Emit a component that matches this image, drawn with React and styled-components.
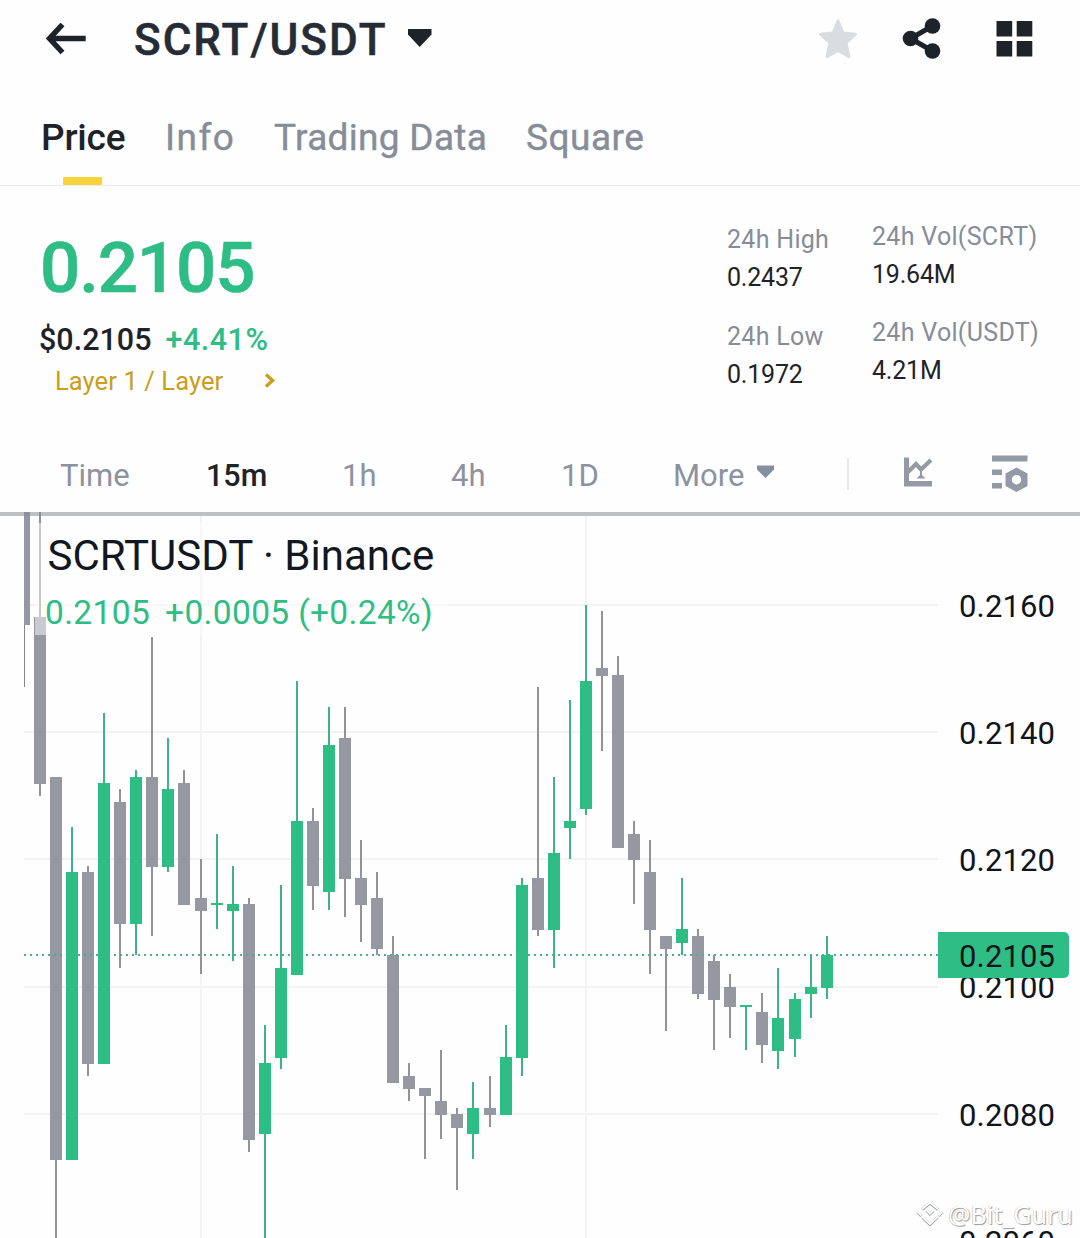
import React from "react";
import styled, { createGlobalStyle } from "styled-components";

const GlobalStyle = createGlobalStyle`
  * {
    box-sizing: border-box;
  }
  body {
    margin: 0;
    background: #fefefe;
    overflow: hidden;
  }
`;

const UP = "#2ebd85";
const DOWN = "#9598a1";

const Container = styled.div`
  display: flex;
  flex-direction: column;
  width: 1080px;
  height: 1238px;
  overflow: hidden;
  background: #fefefe;
  color: #1e2329;
  font-family: Roboto, "Liberation Sans", sans-serif;
`;

const Icon = styled.svg`
  display: block;
  flex-shrink: 0;
`;

const Topbar = styled.header`
  display: flex;
  align-items: center;
  height: 80px;
  padding: 0 46px;
`;

const Pair = styled.div`
  width: 273px;
  margin-left: 48px;
  font-size: 44px;
  font-weight: 500;
  letter-spacing: 2px;
  line-height: 80px;
  white-space: nowrap;
  color: #252c36;
  -webkit-text-stroke: 0.5px;
`;

const Actions = styled.div`
  display: flex;
  align-items: center;
  gap: 44px;
  height: 77px;
  margin-left: auto;
  margin-bottom: 3px;
`;

const Tabs = styled.nav`
  display: flex;
  height: 106px;
  padding-left: 41px;
  border-bottom: 1px solid #eaecef;
`;

const Tab = styled.div`
  position: relative;
  width: ${(props) => props.$width}px;
  margin-right: 40px;
  padding-top: 10px;
  font-size: 37px;
  font-weight: ${(props) => (props.$active ? 500 : 400)};
  letter-spacing: ${(props) => props.$spacing || 0.3}px;
  line-height: 95px;
  white-space: nowrap;
  color: ${(props) => (props.$active ? "#1e2329" : "#868d98")};
  -webkit-text-stroke: ${(props) => (props.$active ? 0 : 0.4)}px;
`;

const TabLine = styled.div`
  position: absolute;
  bottom: 0;
  left: 22px;
  width: 39px;
  height: 8px;
  border-radius: 1px;
  background: #f8d33a;
`;

const Summary = styled.section`
  display: flex;
  height: 252px;
  padding-left: 40px;
`;

const PriceBox = styled.div`
  width: 687px;
  padding-top: 40px;
`;

const LastPrice = styled.div`
  font-size: 71px;
  font-weight: 500;
  line-height: 84px;
  letter-spacing: -1.2px;
  color: ${UP};
  -webkit-text-stroke: 0.6px;
`;

const SubPrice = styled.div`
  display: flex;
  gap: 14px;
  margin: 12px 0 0 -1px;
  font-size: 30.5px;
  font-weight: 500;
  line-height: 36px;
`;

const Change = styled.span`
  letter-spacing: 0.5px;
  color: ${UP};
`;

const Tag = styled.div`
  display: flex;
  align-items: center;
  gap: 41px;
  margin: 6px 0 0 15px;
  font-size: 25.5px;
  line-height: 34px;
  letter-spacing: 0.1px;
  color: #c99f1c;
`;

const Stats = styled.div`
  width: 145px;
  padding-top: ${(props) => props.$top}px;
`;

const Stat = styled.div`
  margin-bottom: ${(props) => props.$gap}px;
`;

const StatLabel = styled.div`
  font-size: 25px;
  line-height: 38px;
  letter-spacing: 0.3px;
  white-space: nowrap;
  color: #868d98;
`;

const StatValue = styled.div`
  font-size: 25px;
  line-height: ${(props) => props.$line}px;
  letter-spacing: -0.2px;
`;

const Intervals = styled.div`
  display: flex;
  align-items: center;
  height: 74px;
  padding-left: 60px;
`;

const Interval = styled.div`
  display: flex;
  align-items: center;
  gap: 13px;
  width: ${(props) => props.$width}px;
  padding-top: 2px;
  font-size: ${(props) => (props.$active ? 30.5 : 31)}px;
  font-weight: ${(props) => (props.$active ? 500 : 400)};
  line-height: 72px;
  color: ${(props) => (props.$active ? "#1e2329" : "#8d929e")};
`;

const Caret = styled(Icon)`
  margin-bottom: 2px;
`;

const Divider = styled.div`
  width: 2px;
  height: 32px;
  margin-right: 55px;
  margin-bottom: 3px;
  background: #e6e9ec;
`;

const ChartBox = styled.section`
  position: relative;
  flex: 1;
`;

const ChartEdge = styled.div`
  position: absolute;
  top: 0;
  left: 0;
  right: 0;
  height: 4px;
  background: rgba(132, 138, 144, 0.53);
`;

const Legend = styled.div`
  position: absolute;
  top: 11px;
  left: 35px;
  width: 412px;
  height: 112px;
  background: rgba(254, 254, 254, 0.5);
  white-space: nowrap;
`;

const LegendTitle = styled.div`
  padding: 1px 0 0 12.5px;
  font-size: 42px;
  line-height: 64px;
  color: #131722;
`;

const LegendValues = styled.div`
  display: flex;
  gap: 15px;
  padding-left: 10px;
  font-size: 33.5px;
  line-height: 49px;
  letter-spacing: 0.35px;
  color: ${UP};
`;

const AxisText = styled.text`
  font-family: Roboto, sans-serif;
  font-size: 31px;
  letter-spacing: 0.15px;
  fill: #10141d;
`;

const Watermark = styled.div`
  position: absolute;
  left: 916px;
  bottom: 6px;
  display: flex;
  align-items: center;
  gap: 4px;
  font-family: "Noto Sans", sans-serif;
  font-size: 25px;
  line-height: 36px;
  color: #fff;
  text-shadow: 1px 1px 1px rgba(70, 74, 84, 0.55), -0.5px -0.5px 0.5px rgba(110, 114, 124, 0.45);
`;

// x, top of body, bottom of body, high, low, up
const candles = [
  [40, 617, 784, 512, 796, 0],
  [56, 777, 1160, 777, 1238, 0],
  [72, 872, 1160, 827, 1160, 1],
  [88, 872, 1064, 866, 1076, 0],
  [104, 783, 1064, 713, 1064, 1],
  [120, 802, 924, 789, 968, 0],
  [136, 777, 924, 770, 955, 1],
  [152, 777, 867, 637, 936, 0],
  [168, 789, 867, 738, 872, 1],
  [184, 783, 905, 770, 905, 0],
  [201, 898, 911, 859, 974, 0],
  [217, 903, 905, 834, 929, 1],
  [233, 904, 911, 866, 961, 1],
  [249, 904, 1140, 898, 1152, 0],
  [265, 1063, 1134, 1025, 1238, 1],
  [281, 968, 1058, 885, 1069, 1],
  [297, 821, 975, 681, 975, 1],
  [313, 821, 886, 808, 910, 0],
  [329, 745, 892, 707, 910, 1],
  [345, 738, 879, 707, 917, 0],
  [361, 878, 905, 840, 942, 0],
  [377, 898, 949, 872, 955, 0],
  [393, 955, 1083, 936, 1083, 0],
  [409, 1076, 1089, 1063, 1101, 0],
  [425, 1088, 1096, 1088, 1159, 0],
  [441, 1101, 1115, 1050, 1139, 0],
  [457, 1114, 1128, 1108, 1190, 0],
  [473, 1108, 1134, 1082, 1159, 1],
  [490, 1108, 1115, 1076, 1127, 0],
  [506, 1057, 1115, 1025, 1115, 1],
  [522, 885, 1058, 878, 1076, 1],
  [538, 878, 930, 687, 936, 0],
  [554, 853, 930, 777, 968, 1],
  [570, 821, 828, 700, 859, 1],
  [586, 681, 809, 605, 815, 1],
  [602, 668, 676, 611, 751, 0],
  [618, 675, 848, 656, 848, 0],
  [634, 834, 860, 821, 904, 0],
  [650, 872, 930, 840, 974, 0],
  [666, 936, 949, 936, 1031, 0],
  [682, 929, 943, 878, 955, 1],
  [698, 936, 994, 929, 999, 0],
  [714, 961, 1000, 955, 1050, 0],
  [730, 987, 1007, 974, 1038, 0],
  [746, 1005, 1007, 1005, 1050, 1],
  [762, 1012, 1045, 993, 1063, 0],
  [778, 1018, 1051, 968, 1069, 1],
  [795, 999, 1039, 993, 1057, 1],
  [811, 987, 994, 955, 1018, 1],
  [827, 955, 988, 936, 999, 1],
];

const priceLevels = [
  ["0.2160", 605, 617],
  ["0.2140", 732, 744],
  ["0.2120", 859, 871],
  ["0.2100", 987, 998],
  ["0.2080", 1114, 1126],
  ["0.2060", 1241, 1253],
];

const Chart = () => (
  <Icon width="1080" height="726" viewBox="0 512 1080 726">
    {priceLevels.map(([label, y]) => (
      <rect key={label} x="24" y={y - 1} width="914" height="2" fill="#f3f3f4" />
    ))}
    <rect x="200" y="516" width="2" height="722" fill="#f3f3f4" />
    <rect x="585" y="516" width="2" height="722" fill="#f3f3f4" />

    <rect x="24" y="512" width="6" height="113" fill={DOWN} />
    <rect x="24" y="625" width="1" height="62" fill="#85878c" />
    {candles.map(([x, top, bottom, high, low, up]) => (
      <g key={x}>
        <rect
          x={x - 1}
          y={high}
          width="2"
          height={low - high}
          fill={up ? "#3cb389" : "#929397"}
        />
        <rect
          x={x - 6}
          y={top}
          width="12"
          height={bottom - top}
          fill={up ? UP : DOWN}
        />
      </g>
    ))}

    <line
      x1="24"
      x2="938"
      y1="955"
      y2="955"
      stroke="#4fae8e"
      strokeWidth="2"
      strokeDasharray="2 4"
    />
    {priceLevels.map(([label, , baseline]) => (
      <AxisText key={label} x="959" y={baseline}>
        {label}
      </AxisText>
    ))}
    <path d="M938 932h126a5 5 0 0 1 5 5v36a5 5 0 0 1-5 5H938z" fill={UP} />
    <AxisText x="959" y="967">
      0.2105
    </AxisText>
  </Icon>
);

const App = () => {
  return (
    <>
      <GlobalStyle />
      <Container>
        <Topbar>
          <Icon width="40" height="34" viewBox="46 23.5 40 34">
            <path
              d="M62.500 25 49.500 39l13 14M50 39h35.700"
              fill="none"
              stroke="#1e2329"
              strokeWidth="5.4"
            />
          </Icon>
          <Pair>SCRT/USDT</Pair>
          <Icon width="25" height="22" viewBox="0 0 25 22">
            <path d="M1 0h23.500v5.500L12.700 18 1 5.500z" fill="#1e2329" />
          </Icon>
          <Actions>
            <Icon width="40" height="42" viewBox="0 0 40 42">
              <path
                d="M20 3l5 12 12.500 1.200-9.500 8.700 3 13.700L20 32.500 9 38.600l3-13.700L2.500 16.200 15 15z"
                fill="#d9dde1"
                stroke="#d9dde1"
                strokeWidth="3"
                strokeLinejoin="round"
              />
            </Icon>
            <Icon width="40" height="42" viewBox="0 0.5 40 42">
              <path
                d="M30.500 8.500 8.500 21l22 12.500"
                fill="none"
                stroke="#1e2329"
                strokeWidth="5"
              />
              <circle cx="30.500" cy="8.500" r="7.800" fill="#1e2329" />
              <circle cx="8.500" cy="21" r="7.800" fill="#1e2329" />
              <circle cx="30.500" cy="33.500" r="7.800" fill="#1e2329" />
            </Icon>
            <Icon width="48" height="38" viewBox="0 0 48 38">
              <path
                d="M10.500 1h15.700v15.500h-15.700zM30.700 1h15.600v15.500h-15.600zM10.500 21h15.700v15.500h-15.700zM30.700 21h15.600v15.500h-15.600z"
                fill="#1e2329"
              />
            </Icon>
          </Actions>
        </Topbar>

        <Tabs>
          <Tab $active $width={84} $spacing={-0.2}>
            Price
            <TabLine />
          </Tab>
          <Tab $width={69} $spacing={1.5}>
            Info
          </Tab>
          <Tab $width={212}>Trading Data</Tab>
          <Tab $width={118} $spacing={0.5}>
            Square
          </Tab>
        </Tabs>

        <Summary>
          <PriceBox>
            <LastPrice>0.2105</LastPrice>
            <SubPrice>
              <span>$0.2105</span>
              <Change>+4.41%</Change>
            </SubPrice>
            <Tag>
              <span>Layer 1 / Layer</span>
              <Icon width="12" height="16" viewBox="0 0.5 12 16">
                <path
                  d="M2 2l6.500 6L2 14"
                  fill="none"
                  stroke="#c99f1c"
                  strokeWidth="3.400"
                />
              </Icon>
            </Tag>
          </PriceBox>
          <Stats $top={35}>
            <Stat $gap={21}>
              <StatLabel>24h High</StatLabel>
              <StatValue $line={38}>0.2437</StatValue>
            </Stat>
            <Stat $gap={0}>
              <StatLabel>24h Low</StatLabel>
              <StatValue $line={38}>0.1972</StatValue>
            </Stat>
          </Stats>
          <Stats $top={32}>
            <Stat $gap={21}>
              <StatLabel>24h Vol(SCRT)</StatLabel>
              <StatValue $line={37}>19.64M</StatValue>
            </Stat>
            <Stat $gap={0}>
              <StatLabel>24h Vol(USDT)</StatLabel>
              <StatValue $line={37}>4.21M</StatValue>
            </Stat>
          </Stats>
        </Summary>

        <Intervals>
          <Interval $width={146}>Time</Interval>
          <Interval $width={136} $active>
            15m
          </Interval>
          <Interval $width={109}>1h</Interval>
          <Interval $width={110}>4h</Interval>
          <Interval $width={112}>1D</Interval>
          <Interval $width={174}>
            More
            <Caret width="17" height="20" viewBox="0 0 17 20">
              <path d="M0 0.500h17v4L8.500 13 0 4.500z" fill="#848e9c" />
            </Caret>
          </Interval>
          <Divider />
          <Icon width="88" height="40" viewBox="904 455.5 88 40">
            <path
              d="M904 458h5v23.500h23v5.500h-28zM916.500 479h9l-3.500-3.500V470h-2v5.500z"
              fill="#949aa5"
            />
            <path
              d="M908 472.500l8-8 5 5.500 10-9.500"
              fill="none"
              stroke="#949aa5"
              strokeWidth="4.200"
            />
          </Icon>
          <Icon width="36" height="40" viewBox="992 455 36 40">
            <path
              d="M992 455.500h35.500v6H992zM992 469.500h10v5.500h-10zM992 483h10v5.500h-10z"
              fill="#949aa5"
            />
            <path
              d="M1016.500 467.500l11 6v12.500l-11 6-11-6v-12.500zM1016.500 475a4.700 4.700 0 1 0 0 9.400 4.700 4.700 0 1 0 0-9.400z"
              fill="#949aa5"
              fillRule="evenodd"
            />
          </Icon>
        </Intervals>

        <ChartBox>
          <Chart />
          <ChartEdge />
          <Legend>
            <LegendTitle>SCRTUSDT · Binance</LegendTitle>
            <LegendValues>
              <span>0.2105</span>
              <span>+0.0005 (+0.24%)</span>
            </LegendValues>
          </Legend>
          <Watermark>
            <Icon width="28" height="24" viewBox="0 0 28 24">
              <path
                d="M6 7.500 14 1l8 6.500M10.500 8.500l3.500 3.500 3.500-3.500M1.500 10l4 4M26.500 10l-4 4M6.500 15.500l7.500 7 7.500-7"
                fill="none"
                stroke="#9da1aa"
                strokeWidth="3"
              />
              <path
                d="M6 7 14 0.500l8 6.500M10.500 8l3.500 3.500L17.500 8M1.500 9.500l4 4M26.500 9.500l-4 4M6.500 15l7.500 7 7.500-7"
                fill="none"
                stroke="#fff"
                strokeWidth="2"
              />
            </Icon>
            @Bit_Guru
          </Watermark>
        </ChartBox>
      </Container>
    </>
  );
};

export default App;
